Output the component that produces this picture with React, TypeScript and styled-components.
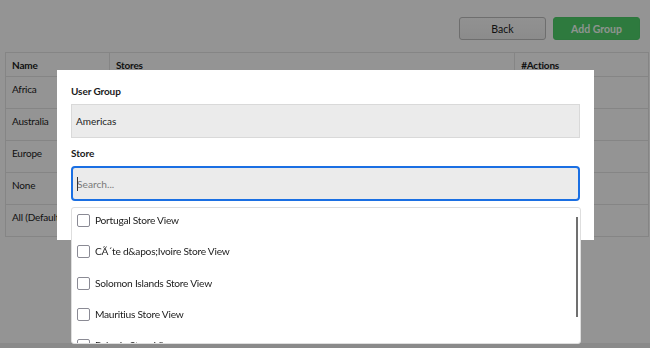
import styled, { createGlobalStyle } from 'styled-components';

const GlobalStyle = createGlobalStyle`
  html {
    background: #eeeeee;
  }
  body {
    margin: 0;
    font-family: Lato, "Open Sans", sans-serif;
    color: #1c1c1c;
  }
`;

const Page = styled.div`
  height: 343px;
  background: #ffffff;
  padding: 17px 1px 0 5px;
  box-sizing: border-box;
`;

const Toolbar = styled.div`
  display: flex;
  justify-content: flex-end;
  gap: 7px;
  padding-right: 9px;
`;

const Button = styled.button<{ $primary?: boolean }>`
  width: 87px;
  height: 23px;
  border-radius: 3px;
  font-family: inherit;
  font-size: 10.5px;
  font-weight: ${(p) => (p.$primary ? 700 : 400)};
  cursor: pointer;
  border: 1px solid ${(p) => (p.$primary ? '#4fce6a' : '#bdbdbd')};
  background: ${(p) => (p.$primary ? '#50d26c' : 'linear-gradient(#fbfbfb, #f0f0f0)')};
  color: ${(p) => (p.$primary ? '#f4fff6' : '#1c1c1c')};
`;

const Table = styled.table`
  width: 100%;
  margin-top: 12px;
  border-collapse: collapse;
  font-size: 10px;
  letter-spacing: -0.2px;
`;

const HeadCell = styled.th<{ $w: number }>`
  width: ${(p) => p.$w}px;
  height: 24px;
  padding: 0 6px;
  text-align: left;
  font-weight: 700;
  border: 1px solid #e6e6e6;
  box-sizing: border-box;
`;

const Cell = styled.td`
  height: 32px;
  padding: 6px 6px 0;
  vertical-align: top;
  border: 1px solid #e6e6e6;
  box-sizing: border-box;
  white-space: nowrap;
`;

const Overlay = styled.div`
  position: fixed;
  inset: 0;
  background: rgba(0, 0, 0, 0.42);
`;

const Modal = styled.div`
  position: absolute;
  left: 57px;
  top: 70px;
  width: 537px;
  height: 170px;
  background: #ffffff;
  padding: 14px 14px 0;
  box-sizing: border-box;
`;

const Label = styled.div`
  font-size: 10px;
  font-weight: 700;
  line-height: 14px;
  color: #1a1a1a;
  margin-bottom: 6px;
  letter-spacing: -0.1px;
`;

const ReadonlyField = styled.div`
  height: 34px;
  background: #ebebeb;
  border: 1px solid #d9d9d9;
  box-sizing: border-box;
  display: flex;
  align-items: center;
  padding: 0 4px;
  font-size: 10px;
  margin-bottom: 8px;
`;

const SearchWrap = styled.div`
  position: relative;
`;

const SearchInput = styled.input`
  width: 100%;
  height: 35px;
  box-sizing: border-box;
  background: #ebebeb;
  border: 2px solid #1a6fe3;
  border-radius: 4px;
  padding: 0 4px;
  font-family: inherit;
  font-size: 10.2px;
  outline: none;
  &::placeholder {
    color: #7a7a7a;
  }
`;

const Caret = styled.span`
  position: absolute;
  left: 6px;
  top: 11px;
  width: 1px;
  height: 14px;
  background: #333;
`;

const Dropdown = styled.div`
  position: absolute;
  top: 41px;
  left: 0;
  right: -1px;
  height: 137px;
  background: #ffffff;
  border: 1px solid #dedede;
  border-radius: 3px;
  box-sizing: border-box;
  overflow: hidden;
`;

const ScrollThumb = styled.div`
  position: absolute;
  right: 2px;
  top: 9px;
  width: 2px;
  height: 100px;
  background: #707070;
`;

const Option = styled.label`
  display: flex;
  align-items: flex-start;
  gap: 5px;
  height: 31.3px;
  padding: 6px 0 0 5px;
  box-sizing: border-box;
  font-size: 10.2px;
  letter-spacing: -0.25px;
  line-height: 13px;
  color: #222;
`;

const Box = styled.span`
  width: 13px;
  height: 13px;
  border: 1.5px solid #8a8a94;
  border-radius: 2px;
  box-sizing: border-box;
  flex-shrink: 0;
`;

const rows = ['Africa', 'Australia', 'Europe', 'None', 'All (Default)'];
const stores = [
  'Portugal Store View',
  'CÃ´te d&apos;Ivoire Store View',
  'Solomon Islands Store View',
  'Mauritius Store View',
  'Bahrain Store View',
];

export default function App() {
  return (
    <>
      <GlobalStyle />
      <Page>
        <Toolbar>
          <Button>Back</Button>
          <Button $primary>Add Group</Button>
        </Toolbar>
        <Table>
          <thead>
            <tr>
              <HeadCell $w={104}>Name</HeadCell>
              <HeadCell $w={406}>Stores</HeadCell>
              <HeadCell $w={134}>#Actions</HeadCell>
            </tr>
          </thead>
          <tbody>
            {rows.map((r) => (
              <tr key={r}>
                <Cell>{r}</Cell>
                <Cell />
                <Cell />
              </tr>
            ))}
          </tbody>
        </Table>
      </Page>
      <Overlay>
        <Modal>
          <Label>User Group</Label>
          <ReadonlyField>Americas</ReadonlyField>
          <Label>Store</Label>
          <SearchWrap>
            <SearchInput placeholder="Search..." />
            <Caret />
            <Dropdown>
              {stores.map((s) => (
                <Option key={s}>
                  <Box />
                  {s}
                </Option>
              ))}
              <ScrollThumb />
            </Dropdown>
          </SearchWrap>
        </Modal>
      </Overlay>
    </>
  );
}
